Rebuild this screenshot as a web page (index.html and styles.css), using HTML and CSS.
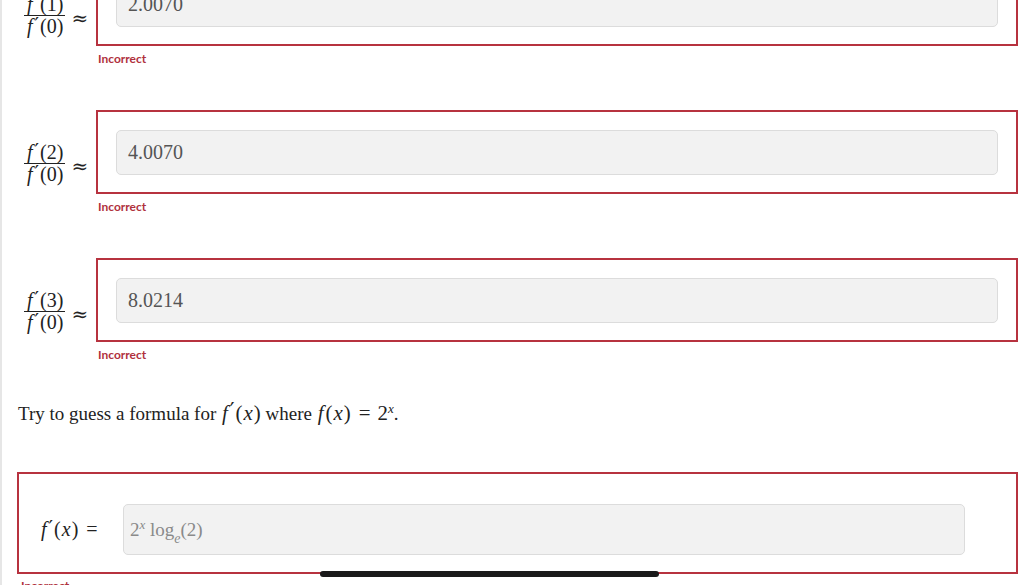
FILE: index.html
```html
<!DOCTYPE html>
<html lang="en">
<head>
    <meta charset="UTF-8">
    <meta name="viewport" content="width=device-width, initial-scale=1.0">
    <title>Derivative of 2^x</title>
    <link rel="stylesheet" href="styles.css">
</head>
<body>
    <div class="page">
        <div class="tip"></div>

        <section class="question first">
            <div class="row">
                <div class="label">
                    <span class="frac">
                        <span class="num"><i class="fn">f</i><span class="pr">&prime;</span>(1)</span>
                        <span class="den"><i class="fn">f</i><span class="pr">&prime;</span>(0)</span>
                    </span>
                    <span class="approx">&asymp;</span>
                </div>
                <div class="answer"><div class="field">2.0070</div></div>
            </div>
            <div class="feedback">Incorrect</div>
        </section>

        <section class="question">
            <div class="row">
                <div class="label">
                    <span class="frac">
                        <span class="num"><i class="fn">f</i><span class="pr">&prime;</span>(2)</span>
                        <span class="den"><i class="fn">f</i><span class="pr">&prime;</span>(0)</span>
                    </span>
                    <span class="approx">&asymp;</span>
                </div>
                <div class="answer"><div class="field">4.0070</div></div>
            </div>
            <div class="feedback">Incorrect</div>
        </section>

        <section class="question">
            <div class="row">
                <div class="label">
                    <span class="frac">
                        <span class="num"><i class="fn">f</i><span class="pr">&prime;</span>(3)</span>
                        <span class="den"><i class="fn">f</i><span class="pr">&prime;</span>(0)</span>
                    </span>
                    <span class="approx">&asymp;</span>
                </div>
                <div class="answer"><div class="field">8.0214</div></div>
            </div>
            <div class="feedback">Incorrect</div>
        </section>

        <p class="prompt">Try to guess a formula for <span class="math"><i class="fn">f</i><span class="pr">&prime;</span>(<i class="var">x</i>)</span> where <span class="math"><i class="fn">f</i>(<i class="var">x</i>)<span class="eq">=</span>2<sup><i>x</i></sup></span>.</p>

        <section class="question formula">
            <div class="answer wide">
                <span class="lhs"><i class="fn">f</i><span class="pr">&prime;</span>(<i class="var">x</i>)<span class="eq">=</span></span>
                <div class="field muted">2<sup><i>x</i></sup> log<sub><i>e</i></sub>(2)</div>
            </div>
            <div class="feedback">Incorrect</div>
        </section>
    </div>

    <!-- iOS home indicator -->
    <div class="home-bar"></div>
</body>
</html>
```

FILE: styles.css
```css
* {
    box-sizing: border-box;
}

html, body {
    margin: 0;
    height: 100%;
    overflow: hidden;
    background-color: #fff;
}

body {
    font-family: "Liberation Serif", "Times New Roman", serif;
    color: #222;
}

.page {
    position: relative;
    min-height: 100%;
    border-left: 2px solid #e6e6e6;
}

/* bit of a popup hanging down from above */
.tip {
    position: absolute;
    top: -20px;
    right: 6px;
    width: 138px;
    height: 23px;
    background-color: #fff;
    border: 1px solid #d6d6d6;
    border-radius: 0 0 4px 4px;
    z-index: 5;
}

/* math bits, spaced roughly like MathJax */
.fn {
    padding: 0 2px 0 1px;
}

.pr {
    display: inline-block;
    font-family: "DejaVu Sans", sans-serif;
    font-size: 1em;
    line-height: 1;
    margin-right: 1px;
    transform: translateY(-2px);
}

.var {
    padding: 0 1px;
}

.eq {
    margin: 0 7px 0 8px;
}

.math {
    font-size: 1.1em;
}

.question {
    margin-bottom: 43px;
}

.question.first {
    margin-top: -38px;
}

.row {
    display: flex;
    align-items: flex-start;
}

.label {
    width: 94px;
    flex-shrink: 0;
    display: flex;
    align-items: center;
    padding-left: 22px;
    padding-top: 32px;
    font-size: 20px;
}

.frac {
    display: inline-flex;
    flex-direction: column;
    align-items: center;
}

.num {
    line-height: 19px;
    padding: 0 2px 1px;
    border-bottom: 1px solid #222;
}

.den {
    line-height: 21px;
    padding: 0 2px;
}

.approx {
    margin-left: 6px;
    margin-top: 5px;
    font-family: "DejaVu Serif", serif;
    font-size: 20px;
}

.answer {
    flex: 1;
    margin-right: 6px;
    border: 2px solid #b7323f;
    padding: 18px 18px 17px;
}

.field {
    height: 45px;
    line-height: 43px;
    padding-left: 11px;
    background-color: #f2f2f2;
    border: 1px solid #dcdcdc;
    border-radius: 5px;
    font-size: 20px;
    color: #555;
}

.feedback {
    margin: 5px 0 0 96px;
    font-family: Lato, "Open Sans", sans-serif;
    font-weight: bold;
    font-size: 12px;
    line-height: 16px;
    color: #b0313d;
}

.prompt {
    margin: -5px 0 46px 16px;
    font-size: 19px;
    line-height: 24px;
}

.prompt sup {
    font-size: 13px;
    vertical-align: 7px;
    line-height: 0;
}

.formula .answer.wide {
    margin-left: 15px;
    display: flex;
    align-items: center;
    padding: 30px 51px 17px 21px;
}

.lhs {
    width: 83px;
    flex-shrink: 0;
    font-size: 20px;
}

.formula .field {
    flex: 1;
    height: 51px;
    line-height: 49px;
    padding-left: 6px;
    font-size: 19px;
}

.field.muted {
    color: #8a8a8a;
}

.field sup {
    font-size: 13px;
    vertical-align: 7px;
    line-height: 0;
}

.field sub {
    font-size: 14px;
    vertical-align: -7px;
    line-height: 0;
}

.formula .feedback {
    margin-left: 19px;
    margin-top: 4px;
}

.home-bar {
    position: fixed;
    left: 320px;
    bottom: 8px;
    width: 339px;
    height: 6px;
    border-radius: 3px;
    background-color: #1a1a1a;
    z-index: 10;
}
```
